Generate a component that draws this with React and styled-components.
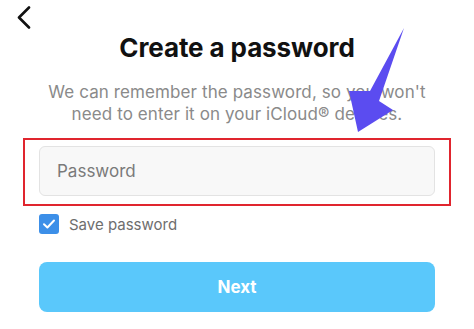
import React from "react";
import styled, { createGlobalStyle } from "styled-components";

const Global = createGlobalStyle`
  html, body { margin: 0; padding: 0; background: #fff; }
  body { font-family: Inter, "Liberation Sans", Arial, sans-serif; }
`;

const Page = styled.div`
  position: relative;
  width: 474px;
  height: 329px;
  overflow: hidden;
  background: #fff;
  display: flex;
  flex-direction: column;
  align-items: center;
`;

const TopBar = styled.div`
  align-self: stretch;
  height: 36px;
  display: flex;
  align-items: flex-start;
  padding: 6px 0 0 16px;
  box-sizing: border-box;
`;

const Title = styled.h1`
  margin: -3px 0 0;
  font-size: 26px;
  line-height: 30px;
  font-weight: 700;
  color: #111;
  letter-spacing: -0.1px;
`;

const Subtitle = styled.p`
  margin: 18px 0 0;
  font-size: 17px;
  line-height: 22px;
  color: #8a8a8a;
  text-align: center;
  white-space: nowrap;
  letter-spacing: 0.1px;
`;

const Highlight = styled.div`
  margin-top: 13px;
  width: 428px;
  box-sizing: border-box;
  border: 2px solid #e0252e;
  padding: 6px 14px 8px;
`;

const Input = styled.div`
  height: 50px;
  box-sizing: border-box;
  border: 1px solid #e3e3e3;
  border-radius: 6px;
  background: #f8f8f8;
  display: flex;
  align-items: center;
  padding-left: 17px;
  font-size: 17px;
  color: #7a7a7a;
`;

const CheckRow = styled.label`
  margin-top: 8px;
  width: 396px;
  display: flex;
  align-items: center;
  gap: 10px;
  font-size: 15px;
  color: #6e6e6e;
`;

const Box = styled.span`
  width: 20px;
  height: 20px;
  border-radius: 3px;
  background: #3c8fe8;
  display: flex;
  align-items: center;
  justify-content: center;
`;

const Button = styled.button`
  margin-top: 28px;
  width: 396px;
  height: 50px;
  border: none;
  border-radius: 8px;
  background: #5ac8fb;
  color: #fff;
  font-family: inherit;
  font-size: 17px;
  font-weight: 700;
`;

const Arrow = styled.svg`
  position: absolute;
  left: 0;
  top: 0;
  pointer-events: none;
`;

export default function App() {
  return (
    <>
      <Global />
      <Page>
        <TopBar>
          <svg width="16" height="24" viewBox="0 0 16 24">
            <path d="M13 1.5 L3 11.5 L13 21.5" fill="none" stroke="#111" strokeWidth="2.6" strokeLinecap="round" strokeLinejoin="round" />
          </svg>
        </TopBar>
        <Title>Create a password</Title>
        <Subtitle>
          We can remember the password, so you won't
          <br />
          need to enter it on your iCloud® devices.
        </Subtitle>
        <Highlight>
          <Input>Password</Input>
        </Highlight>
        <CheckRow>
          <Box>
            <svg width="14" height="14" viewBox="0 0 14 14">
              <path d="M2 7.3 L5.4 10.5 L12 3.5" fill="none" stroke="#fff" strokeWidth="2" strokeLinecap="round" strokeLinejoin="round" />
            </svg>
          </Box>
          Save password
        </CheckRow>
        <Button>Next</Button>
        <Arrow width="474" height="329" viewBox="0 0 474 329">
          <polygon points="404,28 370,91 349,91 358,132 393,110 379,101" fill="#5b4cf0" />
        </Arrow>
      </Page>
    </>
  );
}
